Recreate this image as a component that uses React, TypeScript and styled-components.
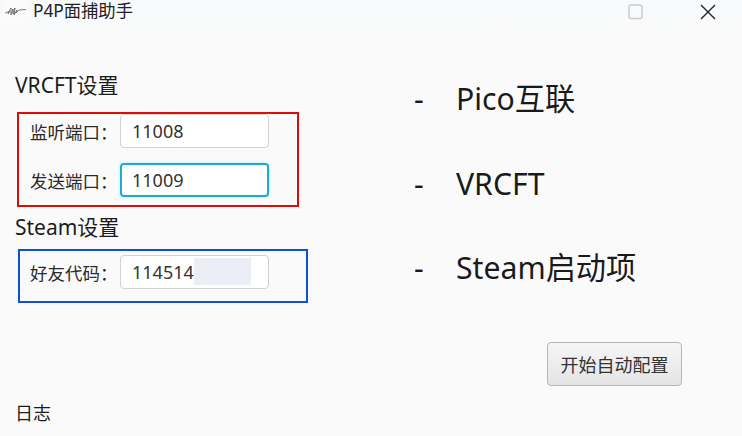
import React from 'react';
import styled, { createGlobalStyle } from 'styled-components';

const GlobalStyle = createGlobalStyle`
  html, body {
    margin: 0;
    padding: 0;
    overflow: hidden;
    background: #fafafa;
  }
  * {
    box-sizing: border-box;
  }
`;

const fontStack = `"Noto Sans", "Noto Sans CJK SC", sans-serif`;

const Window = styled.div`
  width: 742px;
  height: 436px;
  display: flex;
  flex-direction: column;
  overflow: hidden;
  background: #fafafa;
  color: #1c1c1c;
  font-family: ${fontStack};
`;

const TitleBar = styled.div`
  height: 30px;
  flex: none;
  display: flex;
  align-items: flex-start;
  background: linear-gradient(#f7f9fd, #f9fafc 60%, #fafafa);
`;

const AppIcon = styled.svg`
  width: 24px;
  height: 23px;
  margin-left: 3px;
  background: #fbfbfb;
`;

const AppTitle = styled.span`
  margin-left: 6px;
  font-size: 17.3px;
  line-height: 22px;
  color: #222;
`;

const WindowButtons = styled.div`
  margin-left: auto;
  display: flex;
  gap: 55px;
  padding: 3px 25px 0 0;
`;

const Content = styled.div`
  flex: 1;
  display: flex;
  padding: 41px 0 0 15px;
  position: relative;
`;

const LeftColumn = styled.div`
  width: 399px;
  flex: none;
  display: flex;
  flex-direction: column;
`;

const SectionTitle = styled.div`
  font-size: 21px;
  line-height: 28px;
  height: 28px;
  margin-bottom: 13px;
`;

const SteamTitle = styled(SectionTitle)`
  margin: 6px 0 8px;
`;

const SettingsBox = styled.div<{ $colour: string; $width: number; $inset: number; $top: number; $bottom: number }>`
  width: ${({ $width }) => $width}px;
  margin-left: ${({ $inset }) => $inset}px;
  padding: ${({ $top }) => $top}px 0 ${({ $bottom }) => $bottom}px;
  border: 2px solid ${({ $colour }) => $colour};
  display: flex;
  flex-direction: column;
  gap: 15px;
`;

const Field = styled.div`
  display: flex;
  align-items: center;
`;

const FieldLabel = styled.label<{ $width: number; $inset: number }>`
  width: ${({ $width }) => $width}px;
  padding-left: ${({ $inset }) => $inset}px;
  flex: none;
  font-size: 17.5px;
  color: #2a2a2a;
  white-space: nowrap;
`;

const InputBox = styled.div<{ $focused?: boolean }>`
  position: relative;
  width: 149px;
  height: 34px;
  padding-left: ${({ $focused }) => ($focused ? 10 : 11)}px;
  display: flex;
  align-items: center;
  font-size: 18px;
  color: #333;
  background: #fff;
  border-radius: 4px;
  border: ${({ $focused }) => ($focused ? '2px solid #1fa9d6' : '1px solid #d2d2d2')};
  box-shadow: ${({ $focused }) => ($focused ? '0 0 3px #9fe3f5' : 'none')};
`;

const BlurPatch = styled.span`
  position: absolute;
  left: 73px;
  top: 2px;
  width: 57px;
  height: 27px;
  background: #eceef7;
`;

const RightColumn = styled.div`
  flex: 1;
  display: flex;
  flex-direction: column;
`;

const BulletList = styled.ul`
  list-style: none;
  margin: 0;
  padding: 6px 0 0;
  display: flex;
  flex-direction: column;
  gap: 40.5px;
`;

const Bullet = styled.li`
  display: flex;
  font-size: 30.2px;
  line-height: 44px;
  color: #1a1a1a;
`;

const Dash = styled.span`
  width: 42px;
  flex: none;
`;

const StartButton = styled.button`
  align-self: flex-start;
  margin: 52px 0 0 133px;
  width: 135px;
  height: 44px;
  padding: 0;
  font-family: ${fontStack};
  font-size: 18px;
  color: #333;
  border: 1px solid #b5b5b5;
  border-radius: 4px;
  background: linear-gradient(#f6f6f6, #e4e4e4);
`;

const LogTitle = styled(SectionTitle)`
  font-size: 18px;
  position: absolute;
  left: 15px;
  top: 369px;
`;

export default function App() {
  return (
    <Window>
      <GlobalStyle />
      <TitleBar>
        <AppIcon viewBox="0 0 24 23">
          <path
            d="M2 13 L7 11 L5 14 L8 8 L8 15 L10 9 L10 14 L12 8 L11 15 L14 10 L13 13 L16 10 L23 9.5"
            fill="none"
            stroke="#777"
            strokeWidth="1"
          />
        </AppIcon>
        <AppTitle>P4P面捕助手</AppTitle>
        <WindowButtons>
          <svg width="16" height="20" viewBox="0 0 16 20">
            <rect x="1" y="2" width="13" height="13.5" rx="2" fill="none" stroke="#c9c9cc" strokeWidth="1.4" />
          </svg>
          <svg width="18" height="20" viewBox="0 0 18 20">
            <path d="M2 2 L16 16 M16 2 L2 16" fill="none" stroke="#222" strokeWidth="1.4" />
          </svg>
        </WindowButtons>
      </TitleBar>
      <Content>
        <LeftColumn>
          <SectionTitle>VRCFT设置</SectionTitle>
          <SettingsBox $colour="#de0b0b" $width={282} $inset={2} $top={0} $bottom={8}>
            <Field>
              <FieldLabel $width={101} $inset={11}>监听端口：</FieldLabel>
              <InputBox>11008</InputBox>
            </Field>
            <Field>
              <FieldLabel $width={101} $inset={11}>发送端口：</FieldLabel>
              <InputBox $focused>11009</InputBox>
            </Field>
          </SettingsBox>
          <SteamTitle>Steam设置</SteamTitle>
          <SettingsBox $colour="#0b50d6" $width={290} $inset={3} $top={4} $bottom={12}>
            <Field>
              <FieldLabel $width={100} $inset={10}>好友代码：</FieldLabel>
              <InputBox>
                114514
                <BlurPatch />
              </InputBox>
            </Field>
          </SettingsBox>
        </LeftColumn>
        <RightColumn>
          <BulletList>
            <Bullet>
              <Dash>-</Dash>Pico互联
            </Bullet>
            <Bullet>
              <Dash>-</Dash>VRCFT
            </Bullet>
            <Bullet>
              <Dash>-</Dash>Steam启动项
            </Bullet>
          </BulletList>
          <StartButton>开始自动配置</StartButton>
        </RightColumn>
        <LogTitle>日志</LogTitle>
      </Content>
    </Window>
  );
}
